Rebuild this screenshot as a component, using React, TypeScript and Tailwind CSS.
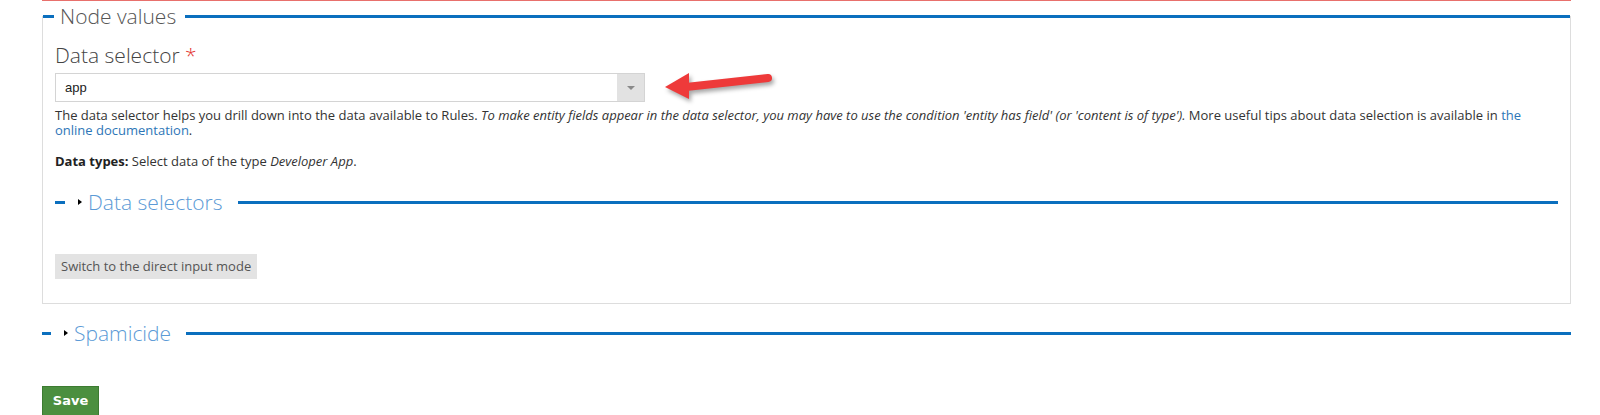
import React from 'react';

const BLUE_LINE = 'bg-[#0b6fbe]';

const Legend = ({ title, lead, gap }: { title: string; lead: string; gap: string }) => (
  <legend className="w-full">
    <div className="flex h-[30px] items-center">
      <span className={`${lead} h-[3px] shrink-0 ${BLUE_LINE}`} />
      <span className="ml-[13px] h-0 w-0 shrink-0 border-y-[3.5px] border-l-[4px] border-y-transparent border-l-black" />
      <span className="ml-[6px] text-[21px] leading-[30px] font-light text-[#5b9ad6]">
        {title}
      </span>
      <span className={`${gap} h-[3px] flex-1 ${BLUE_LINE}`} />
    </div>
  </legend>
);

const RedArrow = () => (
  <svg
    width="120"
    height="40"
    viewBox="0 0 120 40"
    className="ml-[13px] shrink-0 overflow-visible drop-shadow-[2px_3px_2px_rgba(0,0,0,0.35)]"
  >
    <line
      x1="28"
      y1="19"
      x2="110"
      y2="10"
      stroke="#ee3a3a"
      strokeWidth="8"
      strokeLinecap="round"
    />
    <polygon points="7,19 31,5 31,31" fill="#ee3a3a" />
  </svg>
);

const App = () => {
  return (
    <div className="min-h-screen bg-white font-['Open_Sans',sans-serif] text-[#333]">
      <div className="ml-[42px] w-[1529px] border-t border-[#e8706c] pb-8">
        <fieldset className="border border-[#dddddd]">
          <legend className="w-full">
            <div className="flex h-[30px] items-center">
              <span className={`h-[3px] w-[11px] shrink-0 ${BLUE_LINE}`} />
              <span className="ml-[6px] text-[21px] leading-[30px] font-light text-[#555]">
                Node values
              </span>
              <span className={`ml-[9px] h-[3px] flex-1 ${BLUE_LINE}`} />
            </div>
          </legend>

          <div className="px-3 pb-[24px]">
            <label className="mt-[9px] block text-[21px] leading-[30px] font-light text-[#444]">
              Data selector <span className="text-[#e3342f]">*</span>
            </label>

            <div className="mt-[3px] flex h-[29px] items-center">
              <div className="flex h-[29px] w-[590px] shrink-0 border border-[#d4d4d4] bg-white">
                <span className="flex flex-1 items-center pl-[9px] font-['Liberation_Sans',Arial,sans-serif] text-[13px] text-[#222]">
                  app
                </span>
                <span className="flex w-[27px] items-center justify-center bg-[#e2e2e2]">
                  <span className="h-0 w-0 border-x-[4px] border-t-[4px] border-x-transparent border-t-[#8a8a8a]" />
                </span>
              </div>
              <RedArrow />
            </div>

            <p className="mt-[6px] text-[13px] leading-[15px] text-[#333]">
              The data selector helps you drill down into the data available to Rules.{' '}
              <em>
                To make entity fields appear in the data selector, you may have to use the
                condition 'entity has field' (or 'content is of type').
              </em>{' '}
              More useful tips about data selection is available in{' '}
              <a className="text-[#2d76b7]">the online documentation</a>.
            </p>

            <p className="mt-[16px] text-[13px] leading-[15px] text-[#333]">
              <strong className="font-bold text-[#222]">Data types:</strong> Select data of the
              type <em>Developer App</em>.
            </p>

            <fieldset className="mt-[18px]">
              <Legend title="Data selectors" lead="w-[10px]" gap="ml-[16px]" />
            </fieldset>

            <button className="mt-[37px] h-[25px] bg-[#e3e3e3] px-[6px] text-[13px] text-[#555]">
              Switch to the direct input mode
            </button>
          </div>
        </fieldset>

        <fieldset className="mt-[14px]">
          <Legend title="Spamicide" lead="w-[9px]" gap="ml-[15px]" />
        </fieldset>

        <button className="mt-[38px] flex h-[30px] w-[57px] items-center justify-center border border-[#3c7b31] bg-[#4b8f3f] font-['DejaVu_Sans',Verdana,sans-serif] text-[13px] font-bold text-white">
          Save
        </button>
      </div>
    </div>
  );
};

export default App;
